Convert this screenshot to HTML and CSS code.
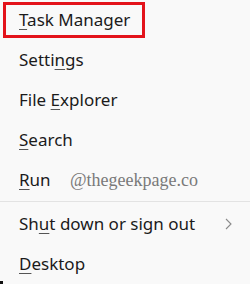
FILE: index.html
```html
<!DOCTYPE html>
<html lang="en">
<head>
    <meta charset="UTF-8">
    <meta name="viewport" content="width=device-width, initial-scale=1.0">
    <title>Context Menu</title>
    <link rel="stylesheet" href="styles.css">
</head>
<body>
    <!-- Menu konteks tombol Start -->
    <ul class="menu">
        <li class="menu-item highlighted">
            <span><u>T</u>ask Manager</span>
            <span class="mark-box"></span>
        </li>
        <li class="menu-item"><span>Setti<u>n</u>gs</span></li>
        <li class="menu-item"><span>File <u>E</u>xplorer</span></li>
        <li class="menu-item"><span><u>S</u>earch</span></li>
        <li class="menu-item">
            <span><u>R</u>un</span>
            <span class="watermark">@thegeekpage.co</span>
        </li>
        <li class="separator"></li>
        <li class="menu-item has-sub">
            <span>Sh<u>u</u>t down or sign out</span>
            <svg class="chevron" width="7" height="12" viewBox="0 0 7 12">
                <polyline points="1,1 6,6 1,11" fill="none" stroke="#8a8a8a" stroke-width="1.1"/>
            </svg>
        </li>
        <li class="menu-item"><span><u>D</u>esktop</span></li>
    </ul>
    <span class="cursor-dot"></span>
</body>
</html>
```

FILE: styles.css
```css
/* Style dasar */
body {
    font-family: "Noto Sans", Arial, sans-serif;
    margin: 0;
    padding: 0;
    background-color: #f9f9f9;
    color: #1b1b1b;
    width: 250px;
    height: 284px;
    overflow: hidden;
    position: relative;
}

/* Style menu */
.menu {
    list-style: none;
    margin: 0;
    padding: 0;
}

.menu-item {
    position: relative;
    display: flex;
    align-items: center;
    justify-content: space-between;
    height: 40px;
    line-height: 40px;
    padding: 0 18px 0 19px;
    font-size: 17px;
}

.menu-item u {
    text-decoration: underline;
    text-decoration-thickness: 1px;
    text-underline-offset: 3px;
    text-decoration-color: #555;
}

/* Kotak merah penanda */
.mark-box {
    position: absolute;
    left: 3px;
    top: 2px;
    width: 136px;
    height: 30px;
    border: 3px solid #e3131b;
}

/* Watermark */
.watermark {
    position: absolute;
    left: 70px;
    top: 0;
    font-family: "Liberation Serif", "Times New Roman", serif;
    font-size: 18px;
    color: #7a7a7a;
}

.separator {
    height: 1px;
    margin: 1px 0 2px;
    background-color: #e3e3e3;
}

.chevron {
    display: block;
}

.cursor-dot {
    position: absolute;
    left: 0;
    top: 281px;
    width: 3px;
    height: 3px;
    background-color: #111;
}
```
